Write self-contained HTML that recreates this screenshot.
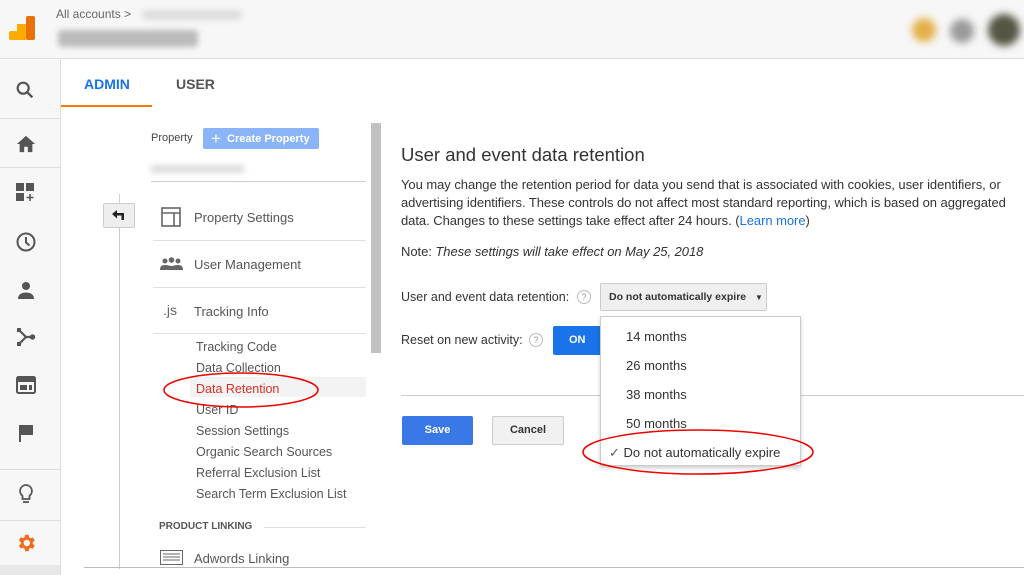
<!DOCTYPE html>
<html><head><meta charset="utf-8"><style>
*{margin:0;padding:0;box-sizing:border-box}
body{width:1024px;height:575px;overflow:hidden;background:#fff;font-family:"Liberation Sans",sans-serif;color:#333;position:relative}
.a{position:absolute}
.t{position:absolute;white-space:nowrap}
.blur{filter:blur(3px);background:#ccc;border-radius:4px}
.side .sep{position:absolute;left:0;width:60px;height:1px;background:#ddd}
.nav{font-size:13px;color:#555}
.sub{font-size:12.5px;color:#555}
.hl{position:absolute;height:1px;background:#e0e0e0}
.p{font-size:12.5px;color:#333}
.pp{font-size:13px;color:#333;letter-spacing:-0.05px}
.menu div{position:absolute;left:25px;font-size:13px;color:#333;white-space:nowrap}
</style></head><body>
<div class="a" style="left:0;top:0;width:1024px;height:59px;background:#f7f7f7;border-bottom:1px solid #ddd"></div>
<div class="a" style="left:9px;top:31px;width:9px;height:9px;background:#f9ab00;border-radius:2px"></div>
<div class="a" style="left:17px;top:24px;width:9px;height:16px;background:#f9ab00"></div>
<div class="a" style="left:26px;top:16px;width:9px;height:24px;background:#e8710a;border-radius:2px"></div>
<div class="t" style="left:56px;top:7px;font-size:12px;color:#666">All accounts &gt;</div>
<div class="a blur" style="left:142px;top:10px;width:100px;height:10px;background:#ddd"></div>
<div class="a blur" style="left:58px;top:30px;width:140px;height:17px;background:#bbb"></div>
<div class="a" style="left:912px;top:18px;width:24px;height:24px;border-radius:50%;background:#e3b04a;filter:blur(4px)"></div>
<div class="a" style="left:950px;top:19px;width:24px;height:24px;border-radius:50%;background:#999;filter:blur(4px)"></div>
<div class="a" style="left:988px;top:14px;width:32px;height:32px;border-radius:50%;background:#554;filter:blur(4px)"></div>
<div class="a side" style="left:0;top:60px;width:61px;height:515px;background:#f7f7f7;border-right:1px solid #ddd">
<div class="sep" style="top:58px"></div><div class="sep" style="top:107px"></div><div class="sep" style="top:409px"></div><div class="sep" style="top:460px"></div>
<div class="a" style="left:0;top:505px;width:60px;height:10px;background:#e8e8e8"></div>
</div>
<svg class="a" style="left:14px;top:79px" width="22" height="22" viewBox="0 0 24 24"><circle cx="10" cy="10" r="6" fill="none" stroke="#555" stroke-width="2.4"/><path d="M14.5 14.5L20 20" stroke="#555" stroke-width="2.6"/></svg>
<svg class="a" style="left:15px;top:134px" width="22" height="20" viewBox="0 0 24 22"><path d="M12 2L2 11h3v9h5v-6h4v6h5v-9h3z" fill="#555"/></svg>
<svg class="a" style="left:16px;top:183px" width="20" height="20" viewBox="0 0 20 20"><rect x="0" y="0" width="8" height="8" fill="#555"/><rect x="10" y="0" width="8" height="8" fill="#555"/><rect x="0" y="10" width="8" height="8" fill="#555"/><path d="M14 11v7M10.5 14.5h7" stroke="#555" stroke-width="1.6"/></svg>
<svg class="a" style="left:15px;top:231px" width="22" height="22" viewBox="0 0 22 22"><circle cx="11" cy="11" r="8.5" fill="none" stroke="#555" stroke-width="2"/><path d="M11 6v5.5l3.5 3" fill="none" stroke="#555" stroke-width="2"/></svg>
<svg class="a" style="left:17px;top:281px" width="18" height="18" viewBox="0 0 18 18"><circle cx="9" cy="5" r="4" fill="#555"/><path d="M1 18c0-5 4-6.5 8-6.5s8 1.5 8 6.5z" fill="#555"/></svg>
<svg class="a" style="left:16px;top:327px" width="20" height="20" viewBox="0 0 20 20"><path d="M3 3l7 7h7M3 17l7-7" fill="none" stroke="#555" stroke-width="2.2"/><rect x="1" y="1" width="4" height="4" fill="#555"/><rect x="1" y="15" width="4" height="4" fill="#555"/><circle cx="16.5" cy="10" r="2.7" fill="#555"/></svg>
<svg class="a" style="left:16px;top:376px" width="20" height="18" viewBox="0 0 20 18"><rect x="1" y="1" width="18" height="16" rx="1.5" fill="none" stroke="#555" stroke-width="2"/><rect x="1" y="1" width="18" height="5" fill="#555"/><rect x="4" y="9" width="7" height="5" fill="#555"/><rect x="13" y="9" width="3" height="5" fill="#555"/></svg>
<svg class="a" style="left:18px;top:424px" width="16" height="18" viewBox="0 0 16 18"><path d="M1 1h2v17H1zM3 1h12v10H3z" fill="#555"/></svg>
<svg class="a" style="left:18px;top:483px" width="16" height="22" viewBox="0 0 16 22"><path d="M8 2a6 6 0 0 0-3.5 10.8V16h7v-3.2A6 6 0 0 0 8 2z" fill="none" stroke="#555" stroke-width="1.8"/><path d="M5 19h6" stroke="#555" stroke-width="1.8"/></svg>
<svg class="a" style="left:15px;top:532px" width="22" height="22" viewBox="0 0 24 24"><path fill="#f26b1d" d="M19.4 13a7.5 7.5 0 0 0 0-2l2.1-1.7-2-3.4-2.5 1a7.6 7.6 0 0 0-1.7-1L14.9 3h-4l-.4 2.7a7.6 7.6 0 0 0-1.7 1l-2.5-1-2 3.4L6.4 11a7.5 7.5 0 0 0 0 2l-2.1 1.7 2 3.4 2.5-1a7.6 7.6 0 0 0 1.7 1l.4 2.9h4l.4-2.7a7.6 7.6 0 0 0 1.7-1l2.5 1 2-3.4zM12.9 15.5a3.5 3.5 0 1 1 0-7 3.5 3.5 0 0 1 0 7z"/></svg>
<div class="t" style="left:84px;top:76px;font-size:14px;font-weight:bold;color:#1a73e8">ADMIN</div>
<div class="t" style="left:176px;top:76px;font-size:14px;font-weight:bold;color:#555">USER</div>
<div class="a" style="left:61px;top:105px;width:91px;height:2px;background:#f57c00"></div>
<div class="a" style="left:119px;top:194px;width:1px;height:375px;background:#ccc"></div>
<div class="a" style="left:103px;top:203px;width:32px;height:25px;background:#eee;border:1px solid #ccc;border-radius:2px"></div>
<svg class="a" style="left:110px;top:208px" width="18" height="14" viewBox="0 0 18 14"><path d="M2 6l5-4v3h7v7h-2.5V7.5H7v3z" fill="#222"/></svg>
<div class="t" style="left:151px;top:132px;font-size:11px;color:#444">Property</div>
<div class="a" style="left:203px;top:128px;width:116px;height:21px;background:#8ab4f8;border-radius:2px;color:#fff;font-size:11px;font-weight:bold;line-height:21px;padding-left:8px;white-space:nowrap"><span style="font-size:17px;font-weight:normal;vertical-align:-2px">+</span>&nbsp; Create Property</div>
<div class="a blur" style="left:150px;top:165px;width:95px;height:8px;background:#ddd"></div>
<div class="hl" style="left:151px;top:181px;width:215px;background:#ccc"></div>
<div class="a" style="left:371px;top:123px;width:10px;height:230px;background:#c1c1c1"></div>
<svg class="a" style="left:161px;top:207px" width="20" height="20" viewBox="0 0 20 20"><rect x="1" y="1" width="18" height="18" fill="none" stroke="#666" stroke-width="1.6"/><path d="M1 6h18M13 6v13" stroke="#666" stroke-width="1.6"/></svg>
<div class="t nav" style="left:194px;top:210px">Property Settings</div>
<div class="hl" style="left:153px;top:240px;width:213px"></div>
<svg class="a" style="left:160px;top:257px" width="23" height="14" viewBox="0 0 23 14"><circle cx="5" cy="4" r="2.5" fill="#666"/><circle cx="11.5" cy="3" r="2.8" fill="#666"/><circle cx="18" cy="4" r="2.5" fill="#666"/><path d="M0 13c0-4 2-5 5-5s5 1 6.5 1 3.5-1 6.5-1 5 1 5 5z" fill="#666"/></svg>
<div class="t nav" style="left:194px;top:257px">User Management</div>
<div class="hl" style="left:153px;top:287px;width:213px"></div>
<div class="t" style="left:163px;top:302px;font-size:14px;color:#666">.js</div>
<div class="t nav" style="left:194px;top:304px">Tracking Info</div>
<div class="hl" style="left:153px;top:333px;width:213px"></div>
<div class="a" style="left:190px;top:377px;width:176px;height:20px;background:#f3f3f3"></div>
<div class="t sub" style="left:196px;top:340px">Tracking Code</div>
<div class="t sub" style="left:196px;top:361px">Data Collection</div>
<div class="t sub" style="left:196px;top:382px;color:#d93025">Data Retention</div>
<div class="t sub" style="left:196px;top:403px">User ID</div>
<div class="t sub" style="left:196px;top:424px">Session Settings</div>
<div class="t sub" style="left:196px;top:445px">Organic Search Sources</div>
<div class="t sub" style="left:196px;top:466px">Referral Exclusion List</div>
<div class="t sub" style="left:196px;top:487px">Search Term Exclusion List</div>
<div class="t" style="left:159px;top:521px;font-size:10px;font-weight:bold;color:#555">PRODUCT LINKING</div>
<div class="hl" style="left:264px;top:527px;width:102px"></div>
<svg class="a" style="left:160px;top:550px" width="23" height="15" viewBox="0 0 23 15"><rect x=".5" y=".5" width="22" height="14" fill="none" stroke="#666"/><path d="M3 4h17M3 7h17M3 10h17" stroke="#666"/></svg>
<div class="t nav" style="left:194px;top:551px">Adwords Linking</div>
<div class="a" style="left:84px;top:567px;width:940px;height:1px;background:#bbb"></div>
<svg class="a" style="left:162px;top:370px" width="158" height="40"><ellipse cx="79" cy="20" rx="77" ry="17" fill="none" stroke="#e00" stroke-width="1.5"/></svg>
<div class="t" style="left:401px;top:144px;font-size:18.5px;color:#333">User and event data retention</div>
<div class="t pp" style="left:401px;top:177px">You may change the retention period for data you send that is associated with cookies, user identifiers, or</div>
<div class="t pp" style="left:401px;top:195px">advertising identifiers. These controls do not affect most standard reporting, which is based on aggregated</div>
<div class="t pp" style="left:401px;top:213px">data. Changes to these settings take effect after 24 hours. (<span style="color:#1a73e8">Learn more</span>)</div>
<div class="t pp" style="left:401px;top:244px">Note: <i>These settings will take effect on May 25, 2018</i></div>
<div class="t p" style="left:401px;top:290px">User and event data retention:</div>
<div class="a" style="left:577px;top:290px;width:14px;height:14px;border:1px solid #bbb;border-radius:50%;font-size:9px;color:#999;text-align:center;line-height:12px">?</div>
<div class="a" style="left:600px;top:283px;width:167px;height:28px;background:#efefef;border:1px solid #ccc;border-radius:2px;font-size:10.5px;font-weight:bold;color:#333;line-height:26px;padding-left:8px;white-space:nowrap">Do not automatically expire <span style="font-size:8px;margin-left:6px">&#9660;</span></div>
<div class="t p" style="left:401px;top:333px">Reset on new activity:</div>
<div class="a" style="left:529px;top:333px;width:14px;height:14px;border:1px solid #bbb;border-radius:50%;font-size:9px;color:#999;text-align:center;line-height:12px">?</div>
<div class="a" style="left:553px;top:326px;width:50px;height:29px;background:#1a73e8;border-radius:2px;color:#fff;font-size:11px;font-weight:bold;line-height:29px;padding-left:16px">ON</div>
<div class="a" style="left:401px;top:395px;width:623px;height:1px;background:#ccc"></div>
<div class="a" style="left:402px;top:416px;width:71px;height:29px;background:#3b78e7;border-radius:2px;color:#fff;font-size:11px;font-weight:bold;text-align:center;line-height:29px">Save</div>
<div class="a" style="left:492px;top:416px;width:72px;height:29px;background:#f1f1f1;border:1px solid #ccc;border-radius:2px;color:#333;font-size:11px;font-weight:bold;text-align:center;line-height:27px">Cancel</div>
<div class="a menu" style="left:600px;top:316px;width:201px;height:150px;background:#fff;border:1px solid #ccc;box-shadow:0 2px 4px rgba(0,0,0,.2)">
<div style="top:12px">14 months</div><div style="top:41px">26 months</div><div style="top:70px">38 months</div><div style="top:99px">50 months</div>
<div style="top:128px;left:8px"><span style="color:#555">&#10003;</span>&nbsp;Do not automatically expire</div>
</div>
<svg class="a" style="left:580px;top:426px" width="238" height="54"><ellipse cx="118" cy="26" rx="115" ry="22" fill="none" stroke="#e00" stroke-width="1.5"/></svg>
</body></html>
